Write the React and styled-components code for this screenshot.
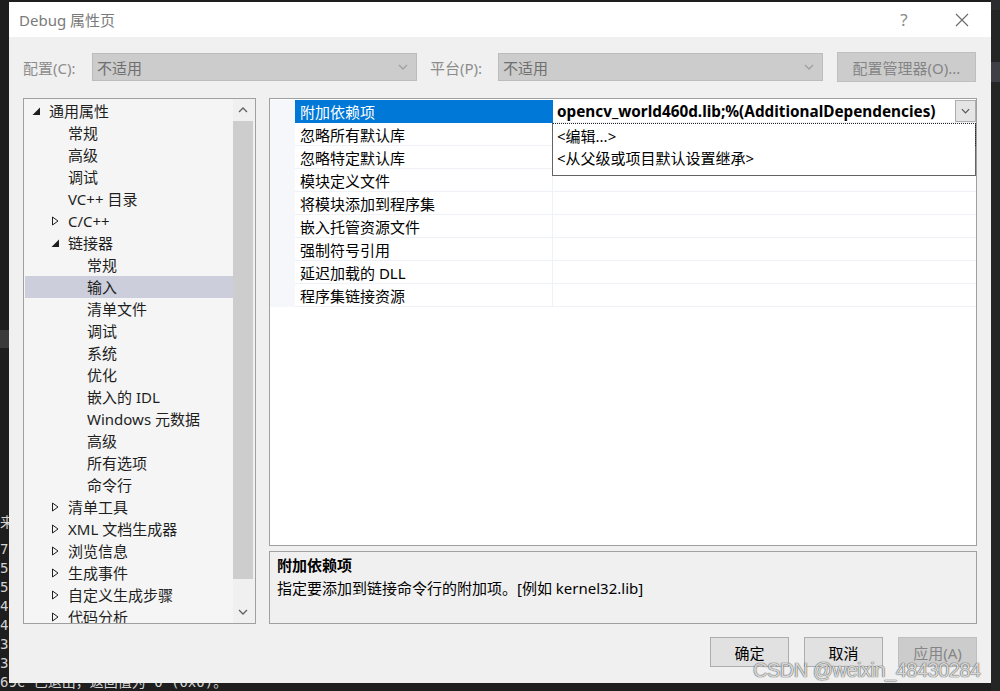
import React from 'react';
import styled, { createGlobalStyle, css } from 'styled-components';

const FONT = `"Noto Sans", "Noto Sans CJK SC", sans-serif`;
const MONO = `"DejaVu Sans Mono", "Noto Sans CJK SC", monospace`;

const GlobalStyle = createGlobalStyle`
  html, body { margin: 0; padding: 0; background: #1e1e1e; }
  body { width: 1000px; height: 691px; overflow: hidden; font-family: ${FONT}; }
  * { box-sizing: border-box; }
`;

const Desktop = styled.div`
  position: relative;
  width: 1000px;
  height: 691px;
  background: #1e1e1e;
  overflow: hidden;
`;

const Console = styled.div`
  display: flex;
  flex-direction: column;
  padding-top: 330px;
  font-family: ${MONO};
  font-size: 14px;
  line-height: 19px;
  color: #d4d4d4;
  white-space: nowrap;
`;

const ConsoleBand = styled.div`
  height: 18px;
  background: #3a3a3a;
  margin-bottom: 165px;
`;

const ConsoleLine = styled.div`
  margin-top: ${p => p.gap || 0}px;
`;

const SideStrip = styled.div`
  position: absolute;
  right: 0;
  top: 0;
  width: 9px;
  height: 691px;
  background: #252526;
  display: flex;
  flex-direction: column;
`;

const StripBand = styled.div`
  height: ${p => p.h}px;
  background: ${p => p.c};
`;

const Window = styled.div`
  position: absolute;
  left: 9px;
  top: 2px;
  width: 982px;
  height: 681px;
  background: #f0f0f0;
  display: flex;
  flex-direction: column;
  font-family: ${FONT};
  font-size: 15px;
  color: #000;
`;

const TitleBar = styled.div`
  height: 35px;
  background: #fff;
  display: flex;
  align-items: center;
  padding-left: 10px;
`;

const Title = styled.div`
  flex: 1;
  font-size: 15px;
  color: #7a7a7a;
  padding-bottom: 1px;
`;

const TitleButton = styled.div`
  width: 58px;
  height: 35px;
  display: flex;
  align-items: center;
  justify-content: center;
  color: #8a8a8a;
  font-size: 17px;
`;

const Body = styled.div`
  flex: 1;
  display: flex;
  flex-direction: column;
  padding: 15px 14px 0 14px;
`;

const ConfigRow = styled.div`
  height: 30px;
  display: flex;
  align-items: center;
`;

const FieldLabel = styled.div`
  width: ${p => p.w}px;
  margin-left: ${p => p.ml || 0}px;
  color: #8c8c8c;
  font-size: 15px;
`;

const Select = styled.div`
  width: 325px;
  height: 28px;
  background: #cccccc;
  border: 1px solid #bcbcbc;
  display: flex;
  align-items: center;
  padding: 0 8px 0 4px;
  color: #6f6f6f;
  font-size: 15px;
`;

const SelectText = styled.div`
  flex: 1;
`;

const GrayButton = styled.div`
  margin-left: 14px;
  width: 139px;
  height: 30px;
  background: #cccccc;
  border: 1px solid #bfbfbf;
  display: flex;
  align-items: center;
  justify-content: center;
  color: #858585;
  font-size: 15px;
`;

const Main = styled.div`
  margin-top: 16px;
  height: 526px;
  display: flex;
  gap: 13px;
`;

const Tree = styled.div`
  width: 233px;
  border: 1px solid #a0a0a0;
  background: #f5f5f5;
  display: flex;
  overflow: hidden;
`;

const TreeList = styled.div`
  flex: 1;
  padding: 1px 0 0 1px;
  overflow: hidden;
`;

const TreeRow = styled.div`
  height: 22px;
  display: flex;
  align-items: center;
  padding-left: ${p => 7 + p.level * 19}px;
  white-space: nowrap;
  color: #1e1e1e;
  ${p => p.selected && css`background: #cccedb;`}
`;

const Expander = styled.div`
  width: 17px;
  height: 22px;
  display: flex;
  align-items: center;
`;

const TreeLabel = styled.span`
  font-size: 15px;
  line-height: 22px;
`;

const ScrollBar = styled.div`
  width: 22px;
  display: flex;
  flex-direction: column;
  background: #f0f0f0;
`;

const ScrollArrow = styled.div`
  height: 22px;
  display: flex;
  align-items: center;
  justify-content: center;
  padding-right: 2px;
`;

const ScrollTrack = styled.div`
  flex: 1;
  padding-right: 2px;
`;

const ScrollThumb = styled.div`
  height: 458px;
  background: #cdcdcd;
`;

const RightColumn = styled.div`
  flex: 1;
  display: flex;
  flex-direction: column;
  gap: 5px;
`;

const Grid = styled.div`
  position: relative;
  flex: 1;
  background: #fff;
  border: 1px solid #a0a0a0;
  padding-top: 1px;
`;

const GridRow = styled.div`
  height: 23px;
  display: flex;
`;

const Gutter = styled.div`
  width: 25px;
  background: #f5f7fb;
`;

const LabelCell = styled.div`
  width: 258px;
  display: flex;
  align-items: center;
  padding-left: 5px;
  border-right: 1px solid #eef1f6;
  border-bottom: 1px solid #eef1f6;
  white-space: nowrap;
  ${p => p.selected && css`
    background: #0078d7;
    color: #fff;
    border-color: #0078d7;
  `}
`;

const ValueCell = styled.div`
  flex: 1;
  display: flex;
  align-items: center;
  padding-left: 4px;
  border-bottom: 1px solid #eef1f6;
`;

const ValueText = styled.div`
  flex: 1;
  font-weight: 700;
  font-size: 15.3px;
  white-space: nowrap;
`;

const DropButton = styled.div`
  width: 21px;
  height: 22px;
  background: #e5e5e5;
  border: 1px solid #adadad;
  display: flex;
  align-items: center;
  justify-content: center;
`;

const DropList = styled.div`
  position: absolute;
  left: 282px;
  top: 24px;
  width: 424px;
  height: 53px;
  background: #fff;
  border: 1px solid #646464;
  border-top: none;
  padding-bottom: 6px;
`;

const DropItem = styled.div`
  height: 22px;
  display: flex;
  align-items: center;
  padding-left: 4px;
  white-space: nowrap;
  ${p => p.focused && css`
    height: 23px;
    border-top: 1px dotted #222;
    border-right: 1px dotted #222;
    margin-right: -1px;
  `}
`;

const DescPanel = styled.div`
  height: 73px;
  border: 1px solid #a0a0a0;
  background: #f0f0f0;
  padding: 1px 7px;
`;

const DescTitle = styled.div`
  font-weight: 700;
  line-height: 24px;
`;

const DescText = styled.div`
  line-height: 23px;
`;

const Footer = styled.div`
  margin-top: 13px;
  display: flex;
  justify-content: flex-end;
  gap: 15px;
`;

const DialogButton = styled.div`
  width: 79px;
  height: 30px;
  display: flex;
  align-items: center;
  justify-content: center;
  background: #e1e1e1;
  border: 1px solid #adadad;
  font-size: 15px;
  ${p => p.disabled && css`
    background: #cccccc;
    border-color: #bfbfbf;
    color: #858585;
  `}
`;

const Watermark = styled.div`
  position: absolute;
  left: 753px;
  top: 659px;
  font-family: "Liberation Sans", Arial, sans-serif;
  font-size: 20px;
  letter-spacing: -0.5px;
  color: rgba(255, 255, 255, 0.8);
  text-shadow: 0 0 1px rgba(60, 60, 60, 0.9), 0 0 1px rgba(60, 60, 60, 0.9);
  white-space: nowrap;
`;

const Chevron = ({ dir = 'down', color = '#7a7a7a', w = 10 }) => (
  <svg width={w} height={6} viewBox="0 0 10 6">
    <path
      d={dir === 'down' ? 'M1 1 L5 5 L9 1' : 'M1 5 L5 1 L9 5'}
      fill="none"
      stroke={color}
      strokeWidth="1.3"
    />
  </svg>
);

const ExpandIcon = ({ open }) =>
  open ? (
    <svg width="9" height="9" viewBox="0 0 9 9">
      <path d="M8 0.5 L8 8 L0.5 8 Z" fill="#1e1e1e" />
    </svg>
  ) : (
    <svg width="9" height="10" viewBox="0 0 9 10">
      <path d="M1.5 1 L7 5 L1.5 9 Z" fill="none" stroke="#1e1e1e" strokeWidth="1" />
    </svg>
  );

const treeItems = [
  { label: '通用属性', level: 0, exp: 'open' },
  { label: '常规', level: 1 },
  { label: '高级', level: 1 },
  { label: '调试', level: 1 },
  { label: 'VC++ 目录', level: 1 },
  { label: 'C/C++', level: 1, exp: 'closed' },
  { label: '链接器', level: 1, exp: 'open' },
  { label: '常规', level: 2 },
  { label: '输入', level: 2, selected: true },
  { label: '清单文件', level: 2 },
  { label: '调试', level: 2 },
  { label: '系统', level: 2 },
  { label: '优化', level: 2 },
  { label: '嵌入的 IDL', level: 2 },
  { label: 'Windows 元数据', level: 2 },
  { label: '高级', level: 2 },
  { label: '所有选项', level: 2 },
  { label: '命令行', level: 2 },
  { label: '清单工具', level: 1, exp: 'closed' },
  { label: 'XML 文档生成器', level: 1, exp: 'closed' },
  { label: '浏览信息', level: 1, exp: 'closed' },
  { label: '生成事件', level: 1, exp: 'closed' },
  { label: '自定义生成步骤', level: 1, exp: 'closed' },
  { label: '代码分析', level: 1, exp: 'closed' },
];

const properties = [
  '附加依赖项',
  '忽略所有默认库',
  '忽略特定默认库',
  '模块定义文件',
  '将模块添加到程序集',
  '嵌入托管资源文件',
  '强制符号引用',
  '延迟加载的 DLL',
  '程序集链接资源',
];

const consoleLines = ['来', '7e', '51', '50', '41', '4e', '3b', '3c', '69c 已退出，返回值为 0 (0x0)。'];

export default function App() {
  return (
    <Desktop>
      <GlobalStyle />
      <Console>
        <ConsoleBand />
        {consoleLines.map((line, i) => (
          <ConsoleLine key={i} gap={i === 1 ? 8 : 0}>{line}</ConsoleLine>
        ))}
      </Console>
      <SideStrip>
        <StripBand h={10} c="#2d2d30" />
        <StripBand h={52} c="#252526" />
        <StripBand h={20} c="#3f3f46" />
      </SideStrip>

      <Window>
        <TitleBar>
          <Title>Debug 属性页</Title>
          <TitleButton>?</TitleButton>
          <TitleButton>
            <svg width="14" height="14" viewBox="0 0 14 14">
              <path d="M1 1 L13 13 M13 1 L1 13" stroke="#6a6a6a" strokeWidth="1.1" />
            </svg>
          </TitleButton>
        </TitleBar>

        <Body>
          <ConfigRow>
            <FieldLabel w={69}>配置(C):</FieldLabel>
            <Select>
              <SelectText>不适用</SelectText>
              <Chevron color="#a0a0a0" />
            </Select>
            <FieldLabel w={68} ml={13}>平台(P):</FieldLabel>
            <Select>
              <SelectText>不适用</SelectText>
              <Chevron color="#a0a0a0" />
            </Select>
            <GrayButton>配置管理器(O)...</GrayButton>
          </ConfigRow>

          <Main>
            <Tree>
              <TreeList>
                {treeItems.map((item, i) => (
                  <TreeRow key={i} level={item.level} selected={item.selected}>
                    <Expander>{item.exp && <ExpandIcon open={item.exp === 'open'} />}</Expander>
                    <TreeLabel>{item.label}</TreeLabel>
                  </TreeRow>
                ))}
              </TreeList>
              <ScrollBar>
                <ScrollArrow><Chevron dir="up" color="#606060" /></ScrollArrow>
                <ScrollTrack><ScrollThumb /></ScrollTrack>
                <ScrollArrow><Chevron dir="down" color="#606060" /></ScrollArrow>
              </ScrollBar>
            </Tree>

            <RightColumn>
              <Grid>
                {properties.map((name, i) => (
                  <GridRow key={name}>
                    <Gutter />
                    <LabelCell selected={i === 0}>{name}</LabelCell>
                    <ValueCell>
                      {i === 0 && (
                        <>
                          <ValueText>opencv_world460d.lib;%(AdditionalDependencies)</ValueText>
                          <DropButton><Chevron color="#555" w={9} /></DropButton>
                        </>
                      )}
                    </ValueCell>
                  </GridRow>
                ))}
                <DropList>
                  <DropItem focused>&lt;编辑...&gt;</DropItem>
                  <DropItem>&lt;从父级或项目默认设置继承&gt;</DropItem>
                </DropList>
              </Grid>
              <DescPanel>
                <DescTitle>附加依赖项</DescTitle>
                <DescText>指定要添加到链接命令行的附加项。[例如 kernel32.lib]</DescText>
              </DescPanel>
            </RightColumn>
          </Main>

          <Footer>
            <DialogButton>确定</DialogButton>
            <DialogButton>取消</DialogButton>
            <DialogButton disabled>应用(A)</DialogButton>
          </Footer>
        </Body>
      </Window>

      <Watermark>CSDN @weixin_48430284</Watermark>
    </Desktop>
  );
}
